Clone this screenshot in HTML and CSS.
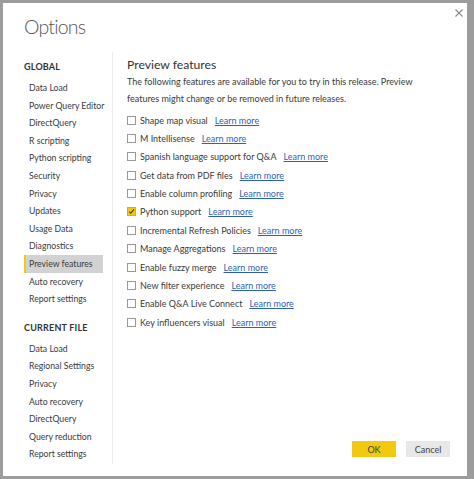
FILE: index.html
```html
<!DOCTYPE html>
<html lang="en">
<head>
    <meta charset="UTF-8">
    <title>Options</title>
    <link rel="stylesheet" href="styles.css">
</head>
<body>
    <div class="dialog">
        <div class="dialog-header">
            <h1 class="dialog-title">Options</h1>
            <svg class="close-btn" width="8" height="8" viewBox="0 0 8 8"><path d="M0.5 0.5 L7.5 7.5 M7.5 0.5 L0.5 7.5" stroke="#8a8a8a" stroke-width="1.1"/></svg>
        </div>
        <div class="dialog-body">
            <div class="sidebar">
                <div class="nav-heading">GLOBAL</div>
                <div class="nav-item">Data Load</div>
                <div class="nav-item">Power Query Editor</div>
                <div class="nav-item">DirectQuery</div>
                <div class="nav-item">R scripting</div>
                <div class="nav-item">Python scripting</div>
                <div class="nav-item">Security</div>
                <div class="nav-item">Privacy</div>
                <div class="nav-item">Updates</div>
                <div class="nav-item">Usage Data</div>
                <div class="nav-item">Diagnostics</div>
                <div class="nav-item active">Preview features</div>
                <div class="nav-item">Auto recovery</div>
                <div class="nav-item">Report settings</div>
                <div class="nav-heading second">CURRENT FILE</div>
                <div class="nav-item">Data Load</div>
                <div class="nav-item">Regional Settings</div>
                <div class="nav-item">Privacy</div>
                <div class="nav-item">Auto recovery</div>
                <div class="nav-item">DirectQuery</div>
                <div class="nav-item">Query reduction</div>
                <div class="nav-item">Report settings</div>
            </div>
            <div class="main">
                <h2 class="main-title">Preview features</h2>
                <p class="description">The following features are available for you to try in this release. Preview features might change or be removed in future releases.</p>
                <div class="feature-list">
                    <label class="feature"><span class="check"></span>Shape map visual <a href="#">Learn more</a></label>
                    <label class="feature"><span class="check"></span>M Intellisense <a href="#">Learn more</a></label>
                    <label class="feature"><span class="check"></span>Spanish language support for Q&amp;A <a href="#">Learn more</a></label>
                    <label class="feature"><span class="check"></span>Get data from PDF files <a href="#">Learn more</a></label>
                    <label class="feature"><span class="check"></span>Enable column profiling <a href="#">Learn more</a></label>
                    <label class="feature"><span class="check checked"><svg width="9" height="9" viewBox="0 0 9 9"><path d="M1.5 4.6 L3.6 6.8 L7.6 1.8" fill="none" stroke="#333" stroke-width="1.3"/></svg></span>Python support <a href="#">Learn more</a></label>
                    <label class="feature"><span class="check"></span>Incremental Refresh Policies <a href="#">Learn more</a></label>
                    <label class="feature"><span class="check"></span>Manage Aggregations <a href="#">Learn more</a></label>
                    <label class="feature"><span class="check"></span>Enable fuzzy merge <a href="#">Learn more</a></label>
                    <label class="feature"><span class="check"></span>New filter experience <a href="#">Learn more</a></label>
                    <label class="feature"><span class="check"></span>Enable Q&amp;A Live Connect <a href="#">Learn more</a></label>
                    <label class="feature"><span class="check"></span>Key influencers visual <a href="#">Learn more</a></label>
                </div>
                <div class="buttons">
                    <button class="btn btn-ok">OK</button>
                    <button class="btn btn-cancel">Cancel</button>
                </div>
            </div>
        </div>
    </div>
</body>
</html>
```

FILE: styles.css
```css
* {
    margin: 0;
    padding: 0;
    box-sizing: border-box;
}
body {
    background-color: #9c9c9c;
    font-family: Lato, 'Liberation Sans', sans-serif;
    color: #3a3a3a;
    padding: 3px 7px 3px 3px;
}
.dialog {
    background-color: #fff;
    width: 464px;
    height: 473px;
    display: flex;
    flex-direction: column;
}
.dialog-header {
    position: relative;
    flex-shrink: 0;
    height: 49px;
    padding: 12px 0 0 21px;
}
.dialog-title {
    font-weight: 300;
    font-size: 19.5px;
    letter-spacing: -0.8px;
    line-height: 24px;
    color: #555;
}
.close-btn {
    position: absolute;
    top: 6px;
    right: 4px;
}
.dialog-body {
    flex: 1;
    display: flex;
    min-height: 0;
}
.sidebar {
    width: 110px;
    padding: 8px 9px 0 21px;
    border-right: 1px solid #ececec;
    margin-bottom: 12px;
}
.nav-heading {
    font-size: 9px;
    font-weight: bold;
    letter-spacing: 0.2px;
    color: #333;
    height: 14px;
    line-height: 14px;
    margin-bottom: 5px;
}
.nav-heading.second {
    margin-top: 13px;
}
.nav-item {
    font-size: 8.7px;
    height: 17.6px;
    line-height: 17.6px;
    padding-left: 5px;
    white-space: nowrap;
}
.nav-item.active {
    background-color: #d2d2d2;
    border-left: 2px solid #f2c811;
    padding-left: 3px;
}
.main {
    flex: 1;
    display: flex;
    flex-direction: column;
    padding: 5px 17px 19px 14px;
}
.main-title {
    font-weight: normal;
    font-size: 12.2px;
    color: #333;
    line-height: 16px;
}
.description {
    font-size: 9px;
    line-height: 17px;
    max-width: 300px;
    margin-bottom: 4px;
}
.feature-list {
    flex: 1;
}
.feature {
    display: flex;
    align-items: center;
    height: 18.36px;
    font-size: 9px;
    white-space: nowrap;
}
.check {
    width: 9px;
    height: 9px;
    border: 1px solid #999;
    margin-right: 4px;
    display: flex;
    align-items: center;
    justify-content: center;
}
.check.checked {
    background-color: #f2c811;
    border-color: #d9b000;
}
.feature a {
    color: #2f5fb3;
    margin-left: 7px;
}
.buttons {
    display: flex;
    justify-content: flex-end;
    gap: 10px;
}
.btn {
    width: 44px;
    height: 16px;
    border: none;
    font-family: Lato, sans-serif;
    font-size: 9px;
    color: #444;
}
.btn-ok {
    background-color: #f2c811;
}
.btn-cancel {
    background-color: #e8e8e8;
}
```
